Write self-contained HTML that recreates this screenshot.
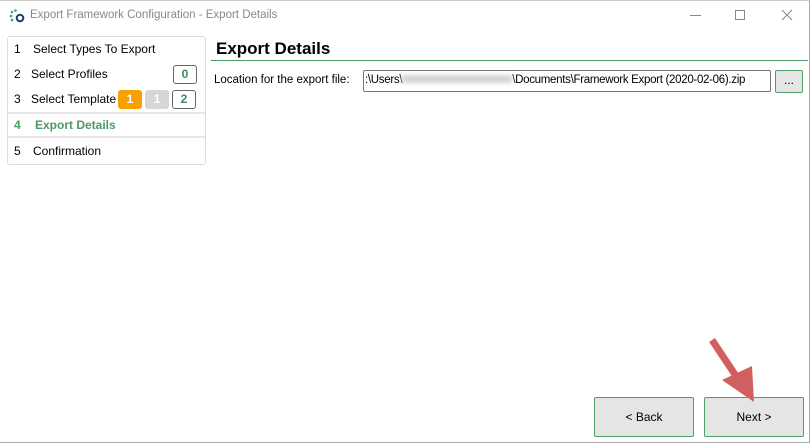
<!DOCTYPE html>
<html><head><style>
*{margin:0;padding:0;box-sizing:border-box}
body{width:810px;height:443px;background:#fff;font-family:"Liberation Sans",sans-serif;font-size:12px;color:#000;position:relative;overflow:hidden}
.frame{position:absolute;left:0;top:0;width:810px;height:443px;border:1px solid #aaa;border-left:none;border-top:1px solid #ccc}
.abs{position:absolute;white-space:nowrap}
.side{position:absolute;left:7px;top:36px;width:199px;height:129px;border:1px solid #ddd;border-radius:3px}
.badge{position:absolute;width:24px;height:19px;border-radius:3px;font-weight:bold;font-size:12px;text-align:center;line-height:19px}
.btn{position:absolute;background:#e5e5e5;border:1px solid #4da06a;border-radius:2px;text-align:center;font-size:12px}
</style></head><body>
<div class="frame"></div>
<svg class="abs" style="left:9px;top:9px" width="16" height="14"><circle cx="2" cy="7" r="1.3" fill="#4a9a6a"/><circle cx="3" cy="3" r="1.3" fill="#4a9a6a"/><circle cx="6.5" cy="1.5" r="1.3" fill="#4a9a6a"/><circle cx="3" cy="11" r="1.3" fill="#4a9a6a"/><circle cx="11" cy="9" r="3.3" fill="none" stroke="#1d3c6e" stroke-width="2"/></svg>
<div class="abs" style="left:30px;top:9px;color:#888;font-size:11.5px">Export Framework Configuration - Export Details</div>
<div class="abs" style="left:690px;top:15px;width:11px;height:1px;background:#888"></div>
<div class="abs" style="left:735px;top:10px;width:10px;height:10px;border:1px solid #888"></div>
<svg class="abs" style="left:781px;top:9px" width="12" height="12"><path d="M1 1L11 11M11 1L1 11" stroke="#888" stroke-width="1"/></svg>

<div class="side"></div>
<div class="abs" style="left:14px;top:42px">1</div><div class="abs" style="left:33px;top:42px">Select Types To Export</div>
<div class="abs" style="left:14px;top:67px">2</div><div class="abs" style="left:31px;top:67px">Select Profiles</div>
<div class="badge" style="left:173px;top:65px;border:1px solid #666;color:#3d8a5c;background:#fff;line-height:17px">0</div>
<div class="abs" style="left:14px;top:92px">3</div><div class="abs" style="left:31px;top:92px">Select Template</div>
<div class="badge" style="left:118px;top:90px;background:#f8a000;color:#fff">1</div>
<div class="badge" style="left:145px;top:90px;background:#d6d6d6;color:#fff">1</div>
<div class="badge" style="left:172px;top:90px;border:1px solid #666;color:#3d8a5c;background:#fff;line-height:17px">2</div>
<div class="abs" style="left:8px;top:112px;width:197px;height:26px;border-top:2px solid #e6e6e6;border-bottom:2px solid #e6e6e6"></div>
<div class="abs" style="left:14px;top:118px;color:#4a9a6a;font-weight:bold">4</div><div class="abs" style="left:35px;top:118px;color:#4a9a6a;font-weight:bold">Export Details</div>
<div class="abs" style="left:14px;top:144px">5</div><div class="abs" style="left:33px;top:144px">Confirmation</div>

<div class="abs" style="left:216px;top:39px;font-size:17px;font-weight:bold">Export Details</div>
<div class="abs" style="left:211px;top:60px;width:597px;height:1px;background:#4a9a6a"></div>
<div class="abs" style="left:214px;top:74px;font-size:11.5px">Location for the export file:</div>
<div class="abs" style="left:363px;top:70px;width:408px;height:22px;border:1px solid #777;border-radius:2px;font-size:11.5px;letter-spacing:-0.3px;padding:3px 0 0 1px;overflow:hidden">:\Users\<span style="display:inline-block;width:110px;height:8px;background:#d4d4d4;filter:blur(2px)"></span>\Documents\Framework Export (2020-02-06).zip</div>
<div class="btn" style="left:775px;top:70px;width:28px;height:23px;line-height:18px">...</div>

<div class="btn" style="left:594px;top:397px;width:100px;height:40px;line-height:38px">&lt; Back</div>
<div class="btn" style="left:704px;top:397px;width:100px;height:40px;line-height:38px">Next &gt;</div>
<svg class="abs" style="left:700px;top:330px" width="80" height="80"><path d="M12 10L36 46" stroke="#d05f5f" stroke-width="7"/><path d="M22 50L52 36L54 72Z" fill="#d05f5f"/></svg>
</body></html>
